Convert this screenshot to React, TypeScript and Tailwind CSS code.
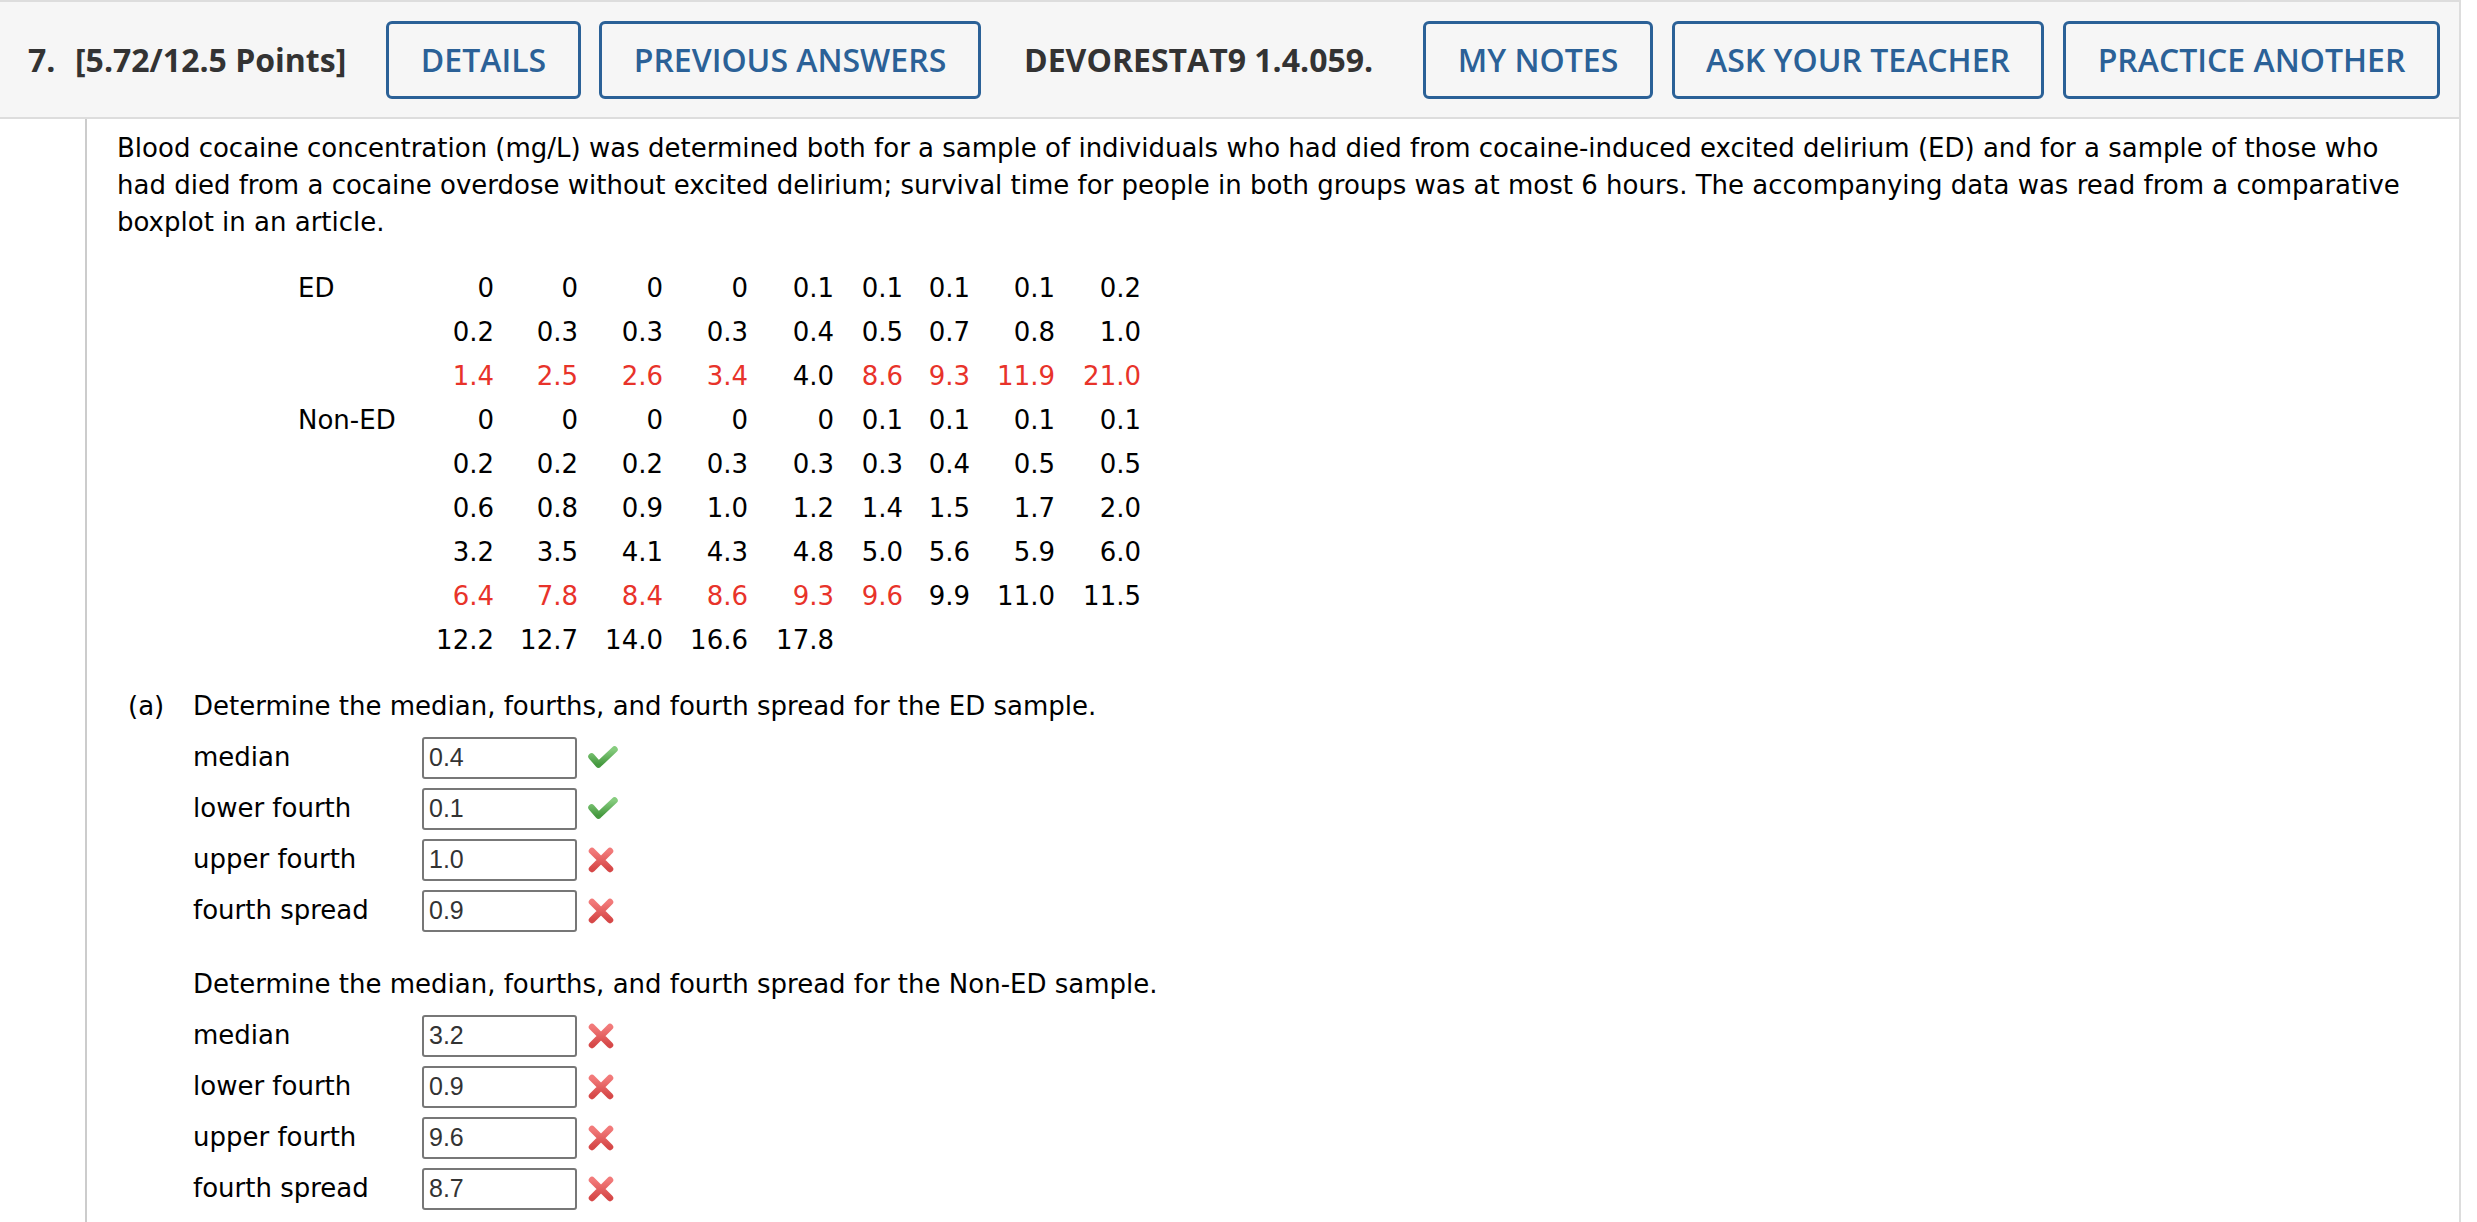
const ED = [
  ["0", "0", "0", "0", "0.1", "0.1", "0.1", "0.1", "0.2"],
  ["0.2", "0.3", "0.3", "0.3", "0.4", "0.5", "0.7", "0.8", "1.0"],
  ["1.4*", "2.5*", "2.6*", "3.4*", "4.0", "8.6*", "9.3*", "11.9*", "21.0*"],
];

const NON_ED = [
  ["0", "0", "0", "0", "0", "0.1", "0.1", "0.1", "0.1"],
  ["0.2", "0.2", "0.2", "0.3", "0.3", "0.3", "0.4", "0.5", "0.5"],
  ["0.6", "0.8", "0.9", "1.0", "1.2", "1.4", "1.5", "1.7", "2.0"],
  ["3.2", "3.5", "4.1", "4.3", "4.8", "5.0", "5.6", "5.9", "6.0"],
  ["6.4*", "7.8*", "8.4*", "8.6*", "9.3*", "9.6*", "9.9", "11.0", "11.5"],
  ["12.2", "12.7", "14.0", "16.6", "17.8"],
];

function HeaderButton({ label, width }: { label: string; width: string }) {
  return (
    <button
      type="button"
      className={`${width} flex h-[78px] shrink-0 items-center justify-center rounded-[6px] border-[3px] border-[#2b6197] bg-[#f6f6f6] text-[32px] font-semibold text-[#2b6197]`}
    >
      {label}
    </button>
  );
}

function Check() {
  return (
    <svg width="30" height="23" viewBox="0 0 30 23" className="ml-[11px]">
      <defs>
        <linearGradient id="g" x1="0" y1="0" x2="0" y2="1">
          <stop offset="0" stopColor="#86cc7e" />
          <stop offset="1" stopColor="#45993f" />
        </linearGradient>
      </defs>
      <path d="M3.5 10.5 L10.5 18.5 L26.5 3.5" fill="none" stroke="url(#g)" strokeWidth="6.5" strokeLinecap="round" strokeLinejoin="round" />
    </svg>
  );
}

function Cross() {
  return (
    <svg width="28" height="28" viewBox="0 0 28 28" className="ml-[10px]">
      <defs>
        <linearGradient id="r" x1="0" y1="0" x2="0" y2="1">
          <stop offset="0" stopColor="#f27a7a" />
          <stop offset="1" stopColor="#d64848" />
        </linearGradient>
      </defs>
      <path d="M5 5 L23 23 M23 5 L5 23" fill="none" stroke="url(#r)" strokeWidth="6.5" strokeLinecap="round" />
    </svg>
  );
}

function Answer({ label, value, ok }: { label: string; value: string; ok: boolean }) {
  return (
    <div className="flex h-[51px] items-center">
      <div className="w-[229px]">{label}</div>
      <div className="flex h-[42px] w-[155px] items-center rounded-[3px] border-2 border-[#777] bg-white pl-[5px] font-['Liberation_Sans',Arial,sans-serif] text-[25px] text-[#333]">
        {value}
      </div>
      {ok ? <Check /> : <Cross />}
    </div>
  );
}

function DataRows({ label, rows }: { label: string; rows: string[][] }) {
  return (
    <>
      {rows.map((row, i) => (
        <div key={i} className="contents">
          <div className="flex h-[44px] items-center">{i === 0 ? label : ""}</div>
          {row.map((v, j) => {
            const red = v.endsWith("*");
            return (
              <div
                key={j}
                className={`flex h-[44px] items-center justify-end ${red ? "text-[#e8332a]" : ""}`}
              >
                {red ? v.slice(0, -1) : v}
              </div>
            );
          })}
          {row.length < 9 &&
            Array.from({ length: 9 - row.length }).map((_, k) => <div key={"e" + k} />)}
        </div>
      ))}
    </>
  );
}

export default function App() {
  return (
    <div className="flex h-[1222px] w-[2477px] flex-col overflow-hidden bg-white font-['DejaVu_Sans',Verdana,sans-serif] text-[26px] leading-[37px] text-black">
      <div className="flex h-[119px] w-[2461px] shrink-0 items-center border-y-2 border-r-2 border-[#dddddd] bg-[#f6f6f6] pl-[28px] font-['Open_Sans',sans-serif]">
        <div className="flex w-[358px] shrink-0 items-center text-[32px] font-bold text-[#333]">
          <span className="w-[47px]">7.</span>
          <span>[5.72/12.5 Points]</span>
        </div>
        <div className="flex gap-[18px]">
          <HeaderButton label="DETAILS" width="w-[195px]" />
          <HeaderButton label="PREVIOUS ANSWERS" width="w-[382px]" />
        </div>
        <div className="ml-[43px] w-[399px] shrink-0 text-[32px] font-bold text-[#333]">DEVORESTAT9 1.4.059.</div>
        <div className="flex gap-[19px]">
          <HeaderButton label="MY NOTES" width="w-[230px]" />
          <HeaderButton label="ASK YOUR TEACHER" width="w-[372px]" />
          <HeaderButton label="PRACTICE ANOTHER" width="w-[377px]" />
        </div>
      </div>

      <div className="ml-[85px] w-[2376px] flex-1 border-x-2 border-l-[#cccccc] border-r-[#dddddd] pl-[30px] pt-[11px]">
        <p>
          Blood cocaine concentration (mg/L) was determined both for a sample of individuals who had died from cocaine-induced excited delirium (ED) and for a sample of those who
          <br />
          had died from a cocaine overdose without excited delirium; survival time for people in both groups was at most 6 hours. The accompanying data was read from a comparative
          <br />
          boxplot in an article.
        </p>

        <div className="ml-[181px] mt-[25px] grid w-fit grid-cols-[111px_85px_84px_85px_85px_86px_69px_67px_85px_86px]">
          <DataRows label="ED" rows={ED} />
          <DataRows label="Non-ED" rows={NON_ED} />
        </div>

        <div className="mt-[26px] flex">
          <div className="ml-[11px] w-[65px]">(a)</div>
          <div>
            <div>Determine the median, fourths, and fourth spread for the ED sample.</div>
            <div className="mt-[7px]">
              <Answer label="median" value="0.4" ok />
              <Answer label="lower fourth" value="0.1" ok />
              <Answer label="upper fourth" value="1.0" ok={false} />
              <Answer label="fourth spread" value="0.9" ok={false} />
            </div>
            <div className="mt-[30px]">Determine the median, fourths, and fourth spread for the Non-ED sample.</div>
            <div className="mt-[7px]">
              <Answer label="median" value="3.2" ok={false} />
              <Answer label="lower fourth" value="0.9" ok={false} />
              <Answer label="upper fourth" value="9.6" ok={false} />
              <Answer label="fourth spread" value="8.7" ok={false} />
            </div>
          </div>
        </div>
      </div>
    </div>
  );
}
